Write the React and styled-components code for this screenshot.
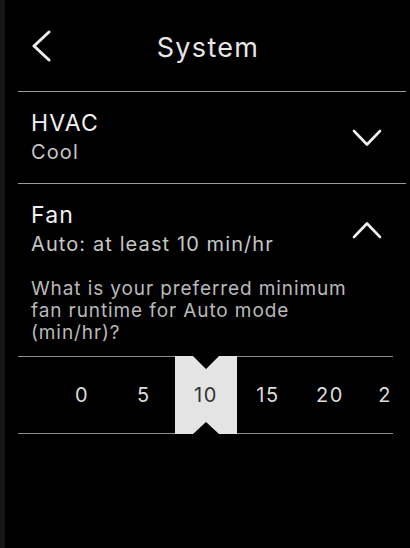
import React from "react";
import styled, { createGlobalStyle } from "styled-components";

const GlobalStyle = createGlobalStyle`
  html, body {
    margin: 0;
    padding: 0;
    background: #000;
  }
  body {
    font-family: Inter, "Open Sans", sans-serif;
    -webkit-font-smoothing: antialiased;
  }
`;

const Screen = styled.div`
  display: flex;
  width: 410px;
  height: 548px;
  background: #000;
  overflow: hidden;
`;

const EdgeStrip = styled.div`
  flex: none;
  width: 5px;
  background: #161616;
`;

const Main = styled.div`
  flex: 1;
  min-width: 0;
  display: flex;
  flex-direction: column;
`;

const Header = styled.header`
  display: grid;
  grid-template-columns: 1fr auto 1fr;
  align-items: center;
  height: 91px;
  margin: 0 4px 0 13px;
  padding-left: 14px;
  border-bottom: 1px solid #9a9a9a;
`;

const BackButton = styled.button`
  justify-self: start;
  padding: 0;
  border: 0;
  background: none;
  display: flex;
  align-items: center;
`;

const Title = styled.h1`
  margin: 0 0 0 -22px;
  padding-top: 3px;
  font-size: 27px;
  font-weight: 400;
  letter-spacing: 1.3px;
  color: #e6e6e6;
`;

const Section = styled.section`
  margin: 0 4px 0 13px;
  border-bottom: ${(p) => (p.$last ? "none" : "1px solid #9a9a9a")};
`;

const Row = styled.div`
  display: flex;
  align-items: center;
  justify-content: space-between;
  padding: 16px 24px 16px 13px;
`;

const Labels = styled.div`
  display: flex;
  flex-direction: column;
`;

const Label = styled.div`
  font-size: 23px;
  line-height: 30px;
  letter-spacing: 1.2px;
  color: #f0f0f0;
`;

const Value = styled.div`
  font-size: 20px;
  line-height: 29px;
  letter-spacing: 1.1px;
  color: #c6c6c6;
`;

const Question = styled.p`
  margin: 3px 0 0;
  padding: 0 13px;
  font-size: 19px;
  line-height: 22px;
  letter-spacing: 0.9px;
  color: #b9b9b9;
`;

const Slider = styled.div`
  margin: 12px 13px 0 0;
  overflow: hidden;
`;

const Track = styled.div`
  display: flex;
  width: max-content;
`;

const Cell = styled.div`
  flex: none;
  width: ${(p) => p.$width || 62}px;
  height: 76px;
  display: flex;
  align-items: center;
  justify-content: center;
  font-size: 20px;
  letter-spacing: 1.6px;
  border-top: 1px solid;
  border-bottom: 1px solid;
  border-color: ${(p) => (p.$selected ? "transparent" : "#8c8c8c")};
  color: ${(p) => (p.$selected ? "#333" : "#dcdcdc")};
  background: ${(p) => (p.$selected ? "#e4e4e4" : "transparent")};
  clip-path: ${(p) =>
    p.$selected
      ? "polygon(0 0, 18px 0, 31px 13px, 44px 0, 100% 0, 100% 100%, 44px 100%, 31px calc(100% - 12px), 18px 100%, 0 100%)"
      : "none"};
`;

const Chevron = ({ up }) => (
  <svg width="30" height="18" viewBox="0 0 30 18" fill="none">
    <path
      d={up ? "M2 16 L15 2.5 L28 16" : "M2 2 L15 15.5 L28 2"}
      stroke="#f0f0f0"
      strokeWidth="2.6"
      strokeLinecap="round"
      strokeLinejoin="round"
    />
  </svg>
);

const values = [0, 5, 10, 15, 20, 25];

export default function App() {
  return (
    <>
      <GlobalStyle />
      <Screen>
        <EdgeStrip />
        <Main>
          <Header>
            <BackButton aria-label="Back">
              <svg width="20" height="32" viewBox="0 0 20 32" fill="none">
                <path
                  d="M17 2 L2 16 L17 30"
                  stroke="#ececec"
                  strokeWidth="3"
                  strokeLinecap="round"
                  strokeLinejoin="round"
                />
              </svg>
            </BackButton>
            <Title>System</Title>
            <span />
          </Header>

          <Section>
            <Row>
              <Labels>
                <Label>HVAC</Label>
                <Value>Cool</Value>
              </Labels>
              <Chevron />
            </Row>
          </Section>

          <Section $last>
            <Row>
              <Labels>
                <Label>Fan</Label>
                <Value>Auto: at least 10 min/hr</Value>
              </Labels>
              <Chevron up />
            </Row>
            <Question>
              What is your preferred minimum
              <br />
              fan runtime for Auto mode
              <br />
              (min/hr)?
            </Question>
            <Slider>
              <Track>
                <Cell $width={33} />
                {values.map((v) => (
                  <Cell key={v} $selected={v === 10}>
                    {v}
                  </Cell>
                ))}
              </Track>
            </Slider>
          </Section>
        </Main>
      </Screen>
    </>
  );
}
